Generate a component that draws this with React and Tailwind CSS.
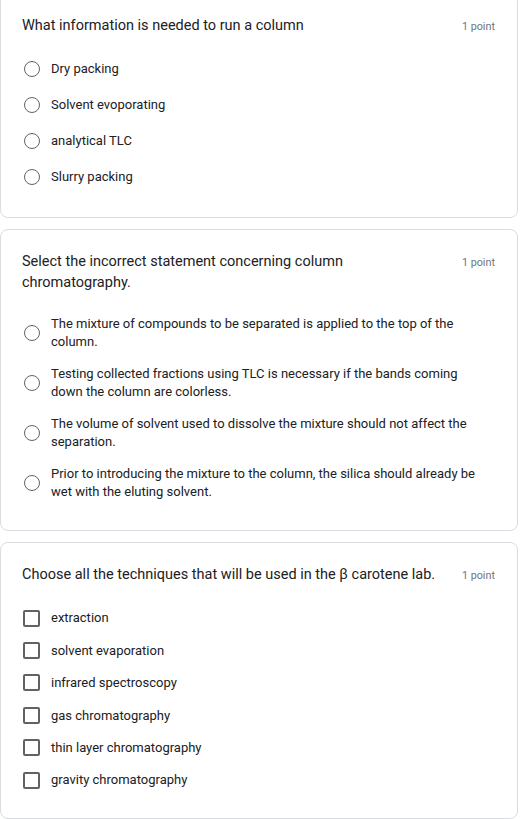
import React from "react";

const font = { fontFamily: "Roboto, 'Noto Sans', Arial, sans-serif" };

function Radio() {
  return <span className="block w-[16px] h-[16px] rounded-full border-[1.5px] border-[#5f6368] shrink-0" />;
}
function Check() {
  return <span className="block w-[17px] h-[17px] rounded-[2px] border-2 border-[#5f6368] shrink-0" />;
}

function Card({ title, children, className = "" }) {
  return (
    <div className={"bg-white border border-[#dadce0] rounded-[8px] pt-[21px] pb-[22px] pl-[21px] pr-[22px] " + className}>
      <div className="flex items-start justify-between">
        <div className="max-w-[430px] text-[14.5px] leading-[21px] text-[#202124]">{title}</div>
        <div className="shrink-0 text-[10.8px] leading-[21px] text-[#70757a] pt-[1px]">1 point</div>
      </div>
      {children}
    </div>
  );
}

export default function App() {
  const q1 = ["Dry packing", "Solvent evoporating", "analytical TLC", "Slurry packing"];
  const q2 = [
    "The mixture of compounds to be separated is applied to the top of the column.",
    "Testing collected fractions using TLC is necessary if the bands coming down the column are colorless.",
    "The volume of solvent used to dissolve the mixture should not affect the separation.",
    "Prior to introducing the mixture to the column, the silica should already be wet with the eluting solvent.",
  ];
  const q3 = [
    "extraction",
    "solvent evaporation",
    "infrared spectroscopy",
    "gas chromatography",
    "thin layer chromatography",
    "gravity chromatography",
  ];
  return (
    <div style={font} className="w-[520px] h-[819px] overflow-hidden bg-white">
      <div className="w-[518px] flex flex-col gap-[11px] -mt-[7px]">
        <Card title="What information is needed to run a column">
          <div className="mt-[14px] flex flex-col">
            {q1.map((t) => (
              <div key={t} className="h-[36px] flex items-center pl-[2px]">
                <Radio />
                <span className="ml-[11px] text-[13px] text-[#202124]">{t}</span>
              </div>
            ))}
          </div>
        </Card>
        <Card title="Select the incorrect statement concerning column chromatography.">
          <div className="mt-[15px] flex flex-col">
            {q2.map((t) => (
              <div key={t} className="py-[7px] flex items-center pl-[2px]">
                <Radio />
                <span className="ml-[11px] text-[13px] leading-[18px] text-[#202124] max-w-[432px]">{t}</span>
              </div>
            ))}
          </div>
        </Card>
        <Card title="Choose all the techniques that will be used in the β carotene lab.">
          <div className="mt-[16px] flex flex-col">
            {q3.map((t) => (
              <div key={t} className="h-[32.4px] flex items-center pl-[1px]">
                <Check />
                <span className="ml-[11px] text-[13px] text-[#202124]">{t}</span>
              </div>
            ))}
          </div>
        </Card>
      </div>
    </div>
  );
}
